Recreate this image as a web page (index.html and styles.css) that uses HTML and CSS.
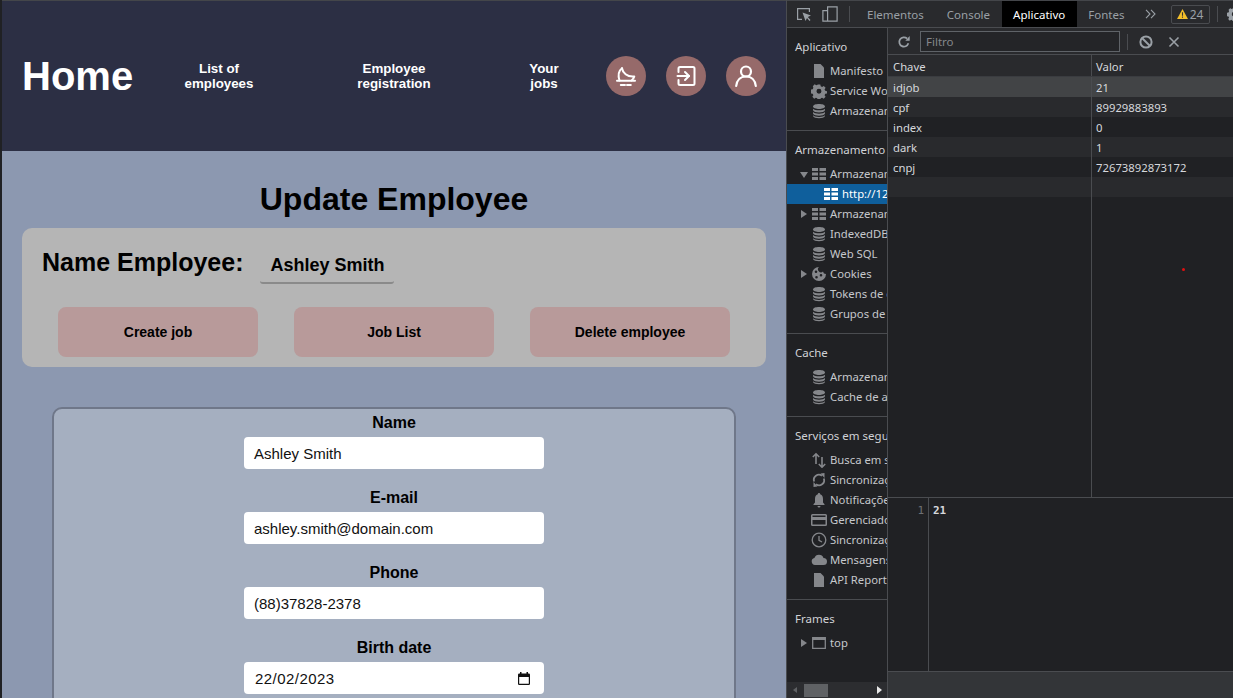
FILE: index.html
```html
<!DOCTYPE html>
<html lang="en">
<head>
<meta charset="utf-8">
<title>Update Employee</title>
<link rel="stylesheet" href="styles.css">
</head>
<body>
<svg class="defs" width="0" height="0" aria-hidden="true">
  <symbol id="i-file" viewBox="0 0 16 16"><path d="M3 1h6.500L13 4.500V15H3z" fill="currentColor"/></symbol>
  <symbol id="i-db" viewBox="0 0 16 16"><g fill="currentColor"><path d="M2 3.500c0-3.300 12-3.300 12 0s-12 3.300-12 0z"/><path d="M2 5.700c2 2.200 10 2.200 12 0v1.500c-1 3-11 3-12 0z"/><path d="M2 9c2 2.200 10 2.200 12 0v1.500c-1 3-11 3-12 0z"/><path d="M2 12.300c2 2.200 10 2.200 12 0v.7c-1 3-11 3-12 0z"/></g></symbol>
  <symbol id="i-grid" viewBox="-1 -2 16 16"><path fill="currentColor" d="M0 0h6v3H0zM7.500 0H14v3H7.500zM0 4.500h6v3H0zM7.500 4.500H14v3H7.500zM0 9h6v3H0zM7.500 9H14v3H7.500z"/></symbol>
  <symbol id="i-gear" viewBox="0 0 16 16"><path fill="currentColor" fill-rule="evenodd" d="M6.500 1h3l.4 2 1.500.7 1.800-1.100 2 2-1.100 1.800.7 1.500 2 .4v2.400l-2 .4-.7 1.500 1.100 1.800-2 2-1.800-1.100-1.500.7-.4 2h-3l-.4-2-1.500-.7-1.800 1.100-2-2 1.100-1.800-.7-1.500-2-.4V6.500l2-.4.7-1.500L1.300 2.800l2-2 1.800 1.100 1.500-.7zM8 5.500a2.700 2.700 0 1 0 0 5.400 2.700 2.700 0 0 0 0-5.400z" transform="translate(.6 .6) scale(.92)"/></symbol>
  <symbol id="i-cookie" viewBox="0 0 16 16"><path fill="currentColor" fill-rule="evenodd" d="M8 1a7 7 0 1 0 7 7 3 3 0 0 1-3-2.500A3 3 0 0 1 8 1zM5 4.500a1.300 1.300 0 1 1 0 2.600 1.300 1.300 0 0 1 0-2.600zM10 8a1.300 1.300 0 1 1 0 2.600A1.300 1.300 0 0 1 10 8zM5.500 10a1.300 1.300 0 1 1 0 2.600 1.300 1.300 0 0 1 0-2.600z"/></symbol>
  <symbol id="i-updown" viewBox="0 0 16 16"><path fill="none" stroke="currentColor" stroke-width="1.600" d="M5 12V2M1.800 5 5 1.800 8.200 5M11 5v10M7.800 12l3.200 3.200 3.200-3.200"/></symbol>
  <symbol id="i-sync" viewBox="0 0 16 16"><g fill="none" stroke="currentColor" stroke-width="1.800"><path d="M3.200 9.500A5 5 0 0 1 11 3.800"/><path d="M12.800 6.500A5 5 0 0 1 5 12.200"/></g><path fill="currentColor" d="M9.500 1.500 13.500 1v5zM6.500 14.500 2.500 15v-5z"/></symbol>
  <symbol id="i-bell" viewBox="0 0 16 16"><path fill="currentColor" d="M8 1a1.200 1.200 0 0 1 1.200 1.300C11.300 3 12 4.800 12 7v3.500l1.500 1.700V13h-11v-.8L4 10.500V7c0-2.200.7-4 2.800-4.700A1.200 1.200 0 0 1 8 1zM6.500 14h3a1.500 1.500 0 0 1-3 0z"/></symbol>
  <symbol id="i-card" viewBox="0 0 16 16"><path fill="currentColor" fill-rule="evenodd" d="M1.500 2h13A1.500 1.500 0 0 1 16 3.500v9a1.500 1.500 0 0 1-1.500 1.500h-13A1.500 1.500 0 0 1 0 12.500v-9A1.500 1.500 0 0 1 1.500 2zm0 1.500V5h13V3.500zm0 4.500v4.500h13V8z"/></symbol>
  <symbol id="i-clock" viewBox="0 0 16 16"><g fill="none" stroke="currentColor" stroke-width="1.300"><circle cx="8" cy="8" r="6.800"/><path d="M8 4v4.300l3 1.700"/></g></symbol>
  <symbol id="i-cloud" viewBox="0 0 16 16"><path fill="currentColor" d="M4 13a3.500 3.500 0 0 1-.6-6.900A4.800 4.800 0 0 1 12.500 6a3.500 3.500 0 0 1 0 7z"/></symbol>
  <symbol id="i-frame" viewBox="0 0 16 16"><path fill="none" stroke="currentColor" stroke-width="1.300" d="M1.700 2.700h12.600v10.600H1.700z"/><path fill="currentColor" d="M1.500 2.500h13V5h-13z"/></symbol>
</svg>

<div class="screen">
  <div class="page">
    <header class="topbar">
      <h1 class="brand">Home</h1>
      <nav class="nav">
        <a class="nav-link">List of employees</a>
        <a class="nav-link nav-link-wide">Employee registration</a>
        <a class="nav-link nav-link-small">Your jobs</a>
      </nav>
      <div class="round-actions">
        <span class="round">
          <svg class="round-icon" viewBox="0 0 24 24"><g fill="none" stroke="#fff" stroke-width="2" stroke-linecap="round" stroke-linejoin="round"><path d="M8 4.200C5 6.500 3.800 11 5.500 16.500"/><path d="M8 4.200C8.500 8.500 13 13.300 20.300 12.500 19.800 14.200 19 15.500 17.500 16.500"/><path d="M3 16.700h18"/><path d="M6.800 21H11M13 21h3.800"/></g></svg>
        </span>
        <span class="round">
          <svg class="round-icon" viewBox="0 0 24 24"><g fill="none" stroke="#fff" stroke-width="2" stroke-linecap="round" stroke-linejoin="round"><path d="M4.500 8V4.500A1.500 1.500 0 0 1 6 3h13a1.500 1.500 0 0 1 1.500 1.500v15A1.500 1.500 0 0 1 19 21H6a1.500 1.500 0 0 1-1.500-1.500V16"/><path d="M3.500 12H15"/><path d="M11 8l4 4-4 4"/></g></svg>
        </span>
        <span class="round">
          <svg class="round-icon" viewBox="0 0 24 24"><g fill="none" stroke="#fff" stroke-width="2.200" stroke-linecap="round"><circle cx="12" cy="7.500" r="5"/><path d="M2.200 22c.5-5.500 4-9.500 9.800-9.500s9.300 4 9.800 9.500"/></g></svg>
        </span>
      </div>
    </header>

    <main class="content">
      <h2 class="title">Update Employee</h2>
      <section class="panel">
        <div class="panel-name">
          <span class="panel-label">Name Employee:</span>
          <span class="panel-value">Ashley Smith</span>
        </div>
        <div class="panel-actions">
          <button class="action" type="button">Create job</button>
          <button class="action" type="button">Job List</button>
          <button class="action" type="button">Delete employee</button>
        </div>
      </section>
      <form class="form">
        <div class="field"><span class="field-label">Name</span><div class="field-input">Ashley Smith</div></div>
        <div class="field"><span class="field-label">E-mail</span><div class="field-input">ashley.smith@domain.com</div></div>
        <div class="field"><span class="field-label">Phone</span><div class="field-input">(88)37828-2378</div></div>
        <div class="field"><span class="field-label">Birth date</span>
          <div class="field-input field-date"><span class="date-text">22/02/2023</span>
            <svg class="cal" viewBox="0 0 12 13"><path fill="#111" fill-rule="evenodd" d="M2 0h1.500v1.500h5V0H10v1.500h.8A1.200 1.200 0 0 1 12 2.700v9.100a1.200 1.200 0 0 1-1.200 1.200H1.200A1.200 1.200 0 0 1 0 11.800V2.700a1.200 1.200 0 0 1 1.200-1.200H2zM1.200 5v6.800h9.600V5z"/></svg>
          </div>
        </div>
      </form>
    </main>
  </div>

  <aside class="devtools">
    <div class="dt-tabs">
      <svg class="dt-tool" viewBox="0 0 16 16"><g fill="none" stroke="#9aa0a6" stroke-width="1.200"><path d="M6 13.400H1.600V2.600h11.800V6"/></g><path fill="#9aa0a6" d="M6.500 6.500 15 9.500 11.800 11 14.500 14l-1 .9L11 12l-1.500 3z"/></svg>
      <svg class="dt-tool dt-tool-next" viewBox="0 0 16 16"><path fill="none" stroke="#9aa0a6" stroke-width="1.200" d="M5.600 4.600H.9v10.500h14.200V.9H5.600v14"/></svg>
      <span class="dt-sep"></span>
      <span class="dt-tab">Elementos</span>
      <span class="dt-tab">Console</span>
      <span class="dt-tab dt-tab-active">Aplicativo</span>
      <span class="dt-tab">Fontes</span>
      <svg class="dt-more" viewBox="0 0 11 10"><path fill="none" stroke="#9aa0a6" stroke-width="1.100" d="M1 .8 5 5 1 9.200M6 .8 10 5 6 9.200"/></svg>
      <span class="dt-warn"><svg class="dt-warn-icon" viewBox="0 0 12 11"><path fill="#f4bf2a" d="M6 0l6 11H0z"/><path fill="#333" d="M5.400 3.500h1.200v4H5.400zM5.400 8.300h1.200v1.200H5.400z"/></svg>24</span>
      <span class="dt-sep dt-sep-end"></span>
      <svg class="dt-gear" viewBox="0 0 16 16"><use href="#i-gear"/></svg>
    </div>
    <div class="dt-body">
      <div class="dt-side">
        <div class="dt-side-list">
          <section class="dt-section">
            <h3 class="dt-head">Aplicativo</h3>
            <div class="dt-row"><svg class="dt-ico"><use href="#i-file"/></svg><span>Manifesto</span></div>
            <div class="dt-row"><svg class="dt-ico"><use href="#i-gear"/></svg><span>Service Workers</span></div>
            <div class="dt-row"><svg class="dt-ico"><use href="#i-db"/></svg><span>Armazenamento</span></div>
          </section>
          <section class="dt-section">
            <h3 class="dt-head">Armazenamento</h3>
            <div class="dt-row"><span class="tri tri-down"></span><svg class="dt-ico"><use href="#i-grid"/></svg><span>Armazenamento local</span></div>
            <div class="dt-row dt-row-selected"><svg class="dt-ico"><use href="#i-grid"/></svg><span>http://127.0.0.1</span></div>
            <div class="dt-row"><span class="tri"></span><svg class="dt-ico"><use href="#i-grid"/></svg><span>Armazenamento de sessão</span></div>
            <div class="dt-row"><svg class="dt-ico"><use href="#i-db"/></svg><span>IndexedDB</span></div>
            <div class="dt-row"><svg class="dt-ico"><use href="#i-db"/></svg><span>Web SQL</span></div>
            <div class="dt-row"><span class="tri"></span><svg class="dt-ico"><use href="#i-cookie"/></svg><span>Cookies</span></div>
            <div class="dt-row"><svg class="dt-ico"><use href="#i-db"/></svg><span>Tokens de confiança</span></div>
            <div class="dt-row"><svg class="dt-ico"><use href="#i-db"/></svg><span>Grupos de interesse</span></div>
          </section>
          <section class="dt-section">
            <h3 class="dt-head">Cache</h3>
            <div class="dt-row"><svg class="dt-ico"><use href="#i-db"/></svg><span>Armazenamento em cache</span></div>
            <div class="dt-row"><svg class="dt-ico"><use href="#i-db"/></svg><span>Cache de aplicativo</span></div>
          </section>
          <section class="dt-section">
            <h3 class="dt-head">Serviços em segundo plano</h3>
            <div class="dt-row"><svg class="dt-ico"><use href="#i-updown"/></svg><span>Busca em segundo plano</span></div>
            <div class="dt-row"><svg class="dt-ico"><use href="#i-sync"/></svg><span>Sincronização em segundo plano</span></div>
            <div class="dt-row"><svg class="dt-ico"><use href="#i-bell"/></svg><span>Notificações</span></div>
            <div class="dt-row"><svg class="dt-ico"><use href="#i-card"/></svg><span>Gerenciador de pagamentos</span></div>
            <div class="dt-row"><svg class="dt-ico"><use href="#i-clock"/></svg><span>Sincronização periódica</span></div>
            <div class="dt-row"><svg class="dt-ico"><use href="#i-cloud"/></svg><span>Mensagens push</span></div>
            <div class="dt-row"><svg class="dt-ico"><use href="#i-file"/></svg><span>API Reporting</span></div>
          </section>
          <section class="dt-section dt-section-last">
            <h3 class="dt-head">Frames</h3>
            <div class="dt-row"><span class="tri"></span><svg class="dt-ico"><use href="#i-frame"/></svg><span>top</span></div>
          </section>
        </div>
        <div class="dt-scroll">
          <span class="sb-arrow sb-left"></span>
          <span class="sb-thumb"></span>
          <span class="sb-arrow sb-right"></span>
        </div>
      </div>
      <div class="dt-main">
        <div class="dt-toolbar">
          <svg class="tb-refresh" viewBox="0 0 16 16"><path fill="none" stroke="#9aa0a6" stroke-width="2" d="M13 9.500A5.300 5.300 0 1 1 11.500 4"/><path fill="#9aa0a6" d="M9.500 6.500 14.500 1v5.500z"/></svg>
          <div class="tb-filter">Filtro</div>
          <span class="tb-sep"></span>
          <svg class="tb-ban" viewBox="0 0 16 16"><g fill="none" stroke="#9aa0a6" stroke-width="2"><circle cx="8" cy="8" r="5.600"/><path d="M4 4l8 8"/></g></svg>
          <svg class="tb-close" viewBox="0 0 12 12"><path fill="none" stroke="#9aa0a6" stroke-width="1.600" d="M1.500 1.500l9 9M10.500 1.500l-9 9"/></svg>
        </div>
        <div class="kv">
          <div class="kv-row kv-header"><span class="kv-key">Chave</span><span class="kv-val">Valor</span></div>
          <div class="kv-row kv-selected"><span class="kv-key">idjob</span><span class="kv-val">21</span></div>
          <div class="kv-row kv-stripe"><span class="kv-key">cpf</span><span class="kv-val">89929883893</span></div>
          <div class="kv-row"><span class="kv-key">index</span><span class="kv-val">0</span></div>
          <div class="kv-row kv-stripe"><span class="kv-key">dark</span><span class="kv-val">1</span></div>
          <div class="kv-row"><span class="kv-key">cnpj</span><span class="kv-val">72673892873172</span></div>
          <div class="kv-row kv-stripe"><span class="kv-key"></span><span class="kv-val"></span></div>
          <div class="kv-row kv-fill"><span class="kv-key"></span><span class="kv-val"></span></div>
          <span class="red-dot"></span>
        </div>
        <div class="preview">
          <div class="gutter">1</div>
          <div class="code">21</div>
        </div>
        <div class="statusbar"></div>
      </div>
    </div>
  </aside>
</div>
</body>
</html>
```

FILE: styles.css
```css
* { box-sizing: border-box; }
html, body { margin: 0; height: 100%; overflow: hidden; }
body { background: #202124; font-family: "Liberation Sans", Arial, sans-serif; }
.defs { position: absolute; }

.screen { display: flex; width: 1233px; height: 698px; padding-left: 2px; overflow: hidden; }

/* Application page */
.page { width: 784px; height: 698px; flex: none; background: #8c98b0; overflow: hidden; border-top: 1px solid #44464a; }
.topbar { display: flex; align-items: center; height: 150px; padding: 0 20px; background: #2c2f44; color: #fff; }
.brand { width: 147px; margin: 0; font-size: 40px; font-weight: 700; line-height: 46px; flex: none; }
.nav { display: flex; flex: 1; align-items: center; }
.nav-link { width: 100px; margin-right: 75px; flex: none; padding: 0 10px; font-size: 13.330px; font-weight: 700; line-height: 15px; text-align: center; }
.nav-link-wide { margin-right: 50px; }
.nav-link-small { padding: 0 35px; margin-right: 0; }
.round-actions { display: flex; gap: 20px; }
.round { display: flex; align-items: center; justify-content: center; width: 40px; height: 40px; border-radius: 50%; background: #966a6a; }
.round-icon { width: 24px; height: 24px; }

.content { display: flex; flex-direction: column; align-items: center; }
.title { margin: 30px 0 10px; font-size: 32px; font-weight: 700; line-height: 37px; color: #000; }
.panel { width: 744px; height: 139px; padding: 0 20px; background: #b5b5b5; border-radius: 10px; }
.panel-name { display: flex; align-items: flex-start; height: 69px; }
.panel-label { margin-top: 20px; font-size: 25px; font-weight: 700; line-height: 29px; color: #000; }
.panel-value { width: 134px; height: 38px; margin: 18px 0 0 17px; padding: 9px 0 0 10px; font-size: 18px; font-weight: 700; line-height: 20px; color: #000; border-bottom: 2px solid #8a8a8a; border-radius: 3px; }
.panel-actions { display: flex; justify-content: space-between; padding: 10px 16px 0; }
.action { width: 200px; height: 50px; padding: 0; border: 0; border-radius: 8px; background: #b89a9a; color: #000; font: 700 14px "Liberation Sans", Arial, sans-serif; }

.form { width: 684px; height: 400px; margin-top: 40px; border: 2px solid #6f7789; border-radius: 10px; background: #a5afc0; display: flex; flex-direction: column; align-items: center; }
.field { display: flex; flex-direction: column; align-items: center; width: 300px; margin-bottom: 15px; }
.field-label { height: 28px; font-size: 16px; font-weight: 700; line-height: 28px; color: #000; }
.field-input { display: flex; align-items: center; justify-content: space-between; width: 300px; height: 32px; padding: 0 14px 0 10px; background: #fff; border-radius: 4px; font-size: 15px; color: #111; }
.date-text { margin-left: 1px; letter-spacing: .45px; }
.cal { width: 12px; height: 13px; }

/* DevTools */
.devtools { flex: 1; display: flex; flex-direction: column; height: 698px; min-width: 0; border-left: 1px solid #4a4c50; background: #202124; font-family: "Noto Sans", "Open Sans", sans-serif; font-size: 12px; color: #c6c8cc; }
.dt-tabs { display: flex; align-items: center; height: 28px; flex: none; border-top: 1px solid #44464a; border-bottom: 1px solid #4a4c50; background: #292a2d; color: #9aa0a6; overflow: hidden; }
.dt-tool { width: 16px; height: 16px; margin-left: 9px; flex: none; }
.dt-tool-next { margin-left: 10px; }
.dt-sep { width: 1px; height: 16px; margin: 0 5.500px 0 11px; background: #4a4c50; flex: none; }
.dt-tab { display: flex; align-items: center; justify-content: center; height: 26px; padding: 0 11.500px; font-size: 11.500px; flex: none; }
.dt-tab-active { background: #000; color: #fff; }
.dt-more { width: 11px; height: 10px; margin-left: 8.500px; flex: none; }
.dt-warn { display: flex; align-items: center; justify-content: center; gap: 2px; width: 39px; height: 19px; margin-left: 15px; border: 1px solid #4a4c50; border-radius: 2px; font-size: 12px; flex: none; }
.dt-warn-icon { width: 11px; height: 10px; }
.dt-sep-end { margin: 0 9px 0 7px; }
.dt-gear { width: 14px; height: 14px; flex: none; color: #9aa0a6; }

.dt-body { display: flex; flex: 1; min-height: 0; }
.dt-side { display: flex; flex-direction: column; width: 101px; flex: none; border-right: 1px solid #4a4c50; background: #202124; }
.dt-side-list { flex: 1; min-height: 0; overflow: hidden; }
.dt-section { padding-bottom: 9px; border-bottom: 1px solid #4a4c50; }
.dt-section-last { border-bottom: 0; }
.dt-head { height: 33px; margin: 0; padding: 9px 0 4px 8px; font-size: 11.500px; font-weight: 400; line-height: 20px; color: #d0d2d6; white-space: nowrap; overflow: hidden; }
.dt-row { display: flex; align-items: center; height: 20px; padding-left: 25px; font-size: 11.300px; white-space: nowrap; overflow: hidden; position: relative; }
.dt-row span:not(.tri) { position: relative; top: -1px; }
.dt-row-selected { background: #0f5f9c; color: #fff; padding-left: 37px; }
.dt-ico { width: 16px; height: 16px; margin: 0 3px 0 -1px; flex: none; color: #85878b; }
.dt-row-selected .dt-ico { color: #fff; }
.tri { position: absolute; left: 14px; top: 6px; width: 0; height: 0; border-style: solid; border-width: 4px 0 4px 6px; border-color: transparent transparent transparent #85878b; }
.tri-down { left: 13px; top: 8px; border-width: 6px 4px 0 4px; border-color: #85878b transparent transparent transparent; }
.dt-scroll { display: flex; align-items: center; height: 16px; flex: none; background: #2c2d30; }
.sb-thumb { width: 24px; height: 13px; margin-left: 7px; background: #5f6164; }
.sb-arrow { width: 0; height: 0; border-style: solid; }
.sb-left { margin-left: 6px; border-width: 3.500px 4px 3.500px 0; border-color: transparent #5f6164 transparent transparent; }
.sb-right { margin-left: 49px; border-width: 4px 0 4px 5px; border-color: transparent transparent transparent #e8e8e8; }

.dt-main { flex: 1; min-width: 0; display: flex; flex-direction: column; }
.dt-toolbar { display: flex; align-items: center; height: 27px; flex: none; padding-top: 1px; background: #292a2d; border-bottom: 1px solid #4a4c50; }
.tb-refresh { width: 14px; height: 14px; margin-left: 9px; flex: none; }
.tb-filter { width: 200px; height: 21px; margin-left: 9px; padding-left: 5px; border: 1px solid #5f6368; background: #242528; color: #85878b; font-size: 11.500px; line-height: 19px; }
.tb-sep { width: 1px; height: 16px; margin: 0 10px 0 7px; background: #4a4c50; }
.tb-ban { width: 16px; height: 16px; }
.tb-close { width: 12px; height: 12px; margin-left: 14px; }

.kv { display: flex; flex-direction: column; height: 443px; flex: none; position: relative; background: #202124; border-bottom: 1px solid #4a4c50; }
.kv-row { display: flex; height: 20px; flex: none; font-size: 11.300px; line-height: 21px; color: #d6d8dc; }
.kv-key { width: 204px; padding-left: 5px; border-right: 1px solid #4a4c50; }
.kv-val { flex: 1; padding-left: 4px; }
.kv-header { height: 22px; background: #292a2d; line-height: 23px; border-bottom: 1px solid #3a3c40; }
.kv-selected { background: #424446; }
.kv-stripe { background: #292a2d; }
.kv-fill { flex: 1; }
.red-dot { position: absolute; left: 294px; top: 213px; width: 3px; height: 3px; border-radius: 50%; background: #e01010; }

.preview { display: flex; flex: 1; min-height: 0; background: #202124; }
.gutter { width: 41px; padding: 4px 4px 0 0; border-right: 1px solid #4a4c50; font-family: "DejaVu Sans Mono", monospace; font-size: 11px; line-height: 17px; text-align: right; color: #6e7074; }
.code { padding: 4px 0 0 4px; font-family: "DejaVu Sans Mono", monospace; font-size: 11px; font-weight: 700; line-height: 17px; color: #d6d8dc; }
.statusbar { height: 27px; flex: none; background: #333538; border-top: 1px solid #4a4c50; }
```
